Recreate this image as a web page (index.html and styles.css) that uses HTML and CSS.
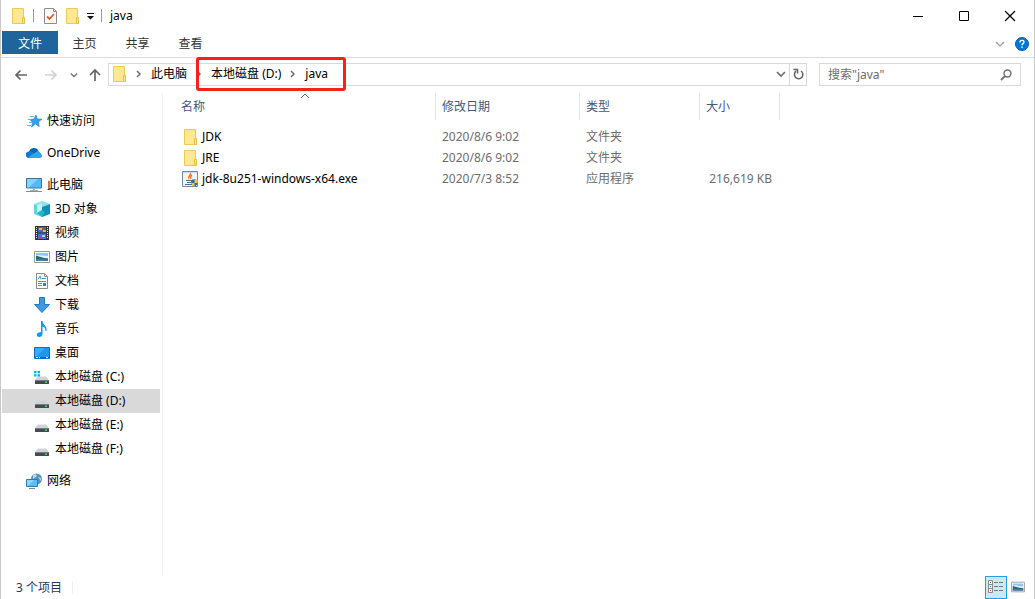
FILE: index.html
```html
<!DOCTYPE html>
<html lang="zh-CN">
<head>
    <meta charset="UTF-8">
    <meta name="viewport" content="width=device-width, initial-scale=1.0">
    <title>java</title>
    <link rel="stylesheet" href="styles.css">
</head>
<body>
    <!-- Shared icons -->
    <svg class="icon-defs" aria-hidden="true">
        <symbol id="folder" viewBox="0 0 16 16">
            <path d="M2.500 .5h11v10h1v5h-12z" fill="#ffe794" stroke="#edc957"/>
            <path d="M12.500 15v-5.500h2v6h-2z" fill="#ffe794" stroke="#e6bf45"/>
        </symbol>
        <symbol id="chevron" viewBox="0 0 8 8">
            <path d="M2 1l3 3-3 3" fill="none" stroke="#707070" stroke-width="1.500"/>
        </symbol>
        <symbol id="down" viewBox="0 0 10 10">
            <path d="M1 3l4 4 4-4" fill="none" stroke="currentColor" stroke-width="1.700"/>
        </symbol>
        <symbol id="picture" viewBox="0 0 16 16">
            <path d="M.5 2.500h15v11H.5z" fill="#fff" stroke="#999"/>
            <path d="M2 4h12v8H2z" fill="#8fc4ff"/>
            <path d="M2 7c3-2 5 0 12 0v2H2z" fill="#e4f1fa"/>
            <path d="M2 7c3 0 6 2 12 2.500V12H2z" fill="#2f6475"/>
            <path d="M2 10.500c4-1 7 0 12 0V12H2z" fill="#477caa"/>
        </symbol>
        <symbol id="drive" viewBox="0 0 16 16">
            <path d="M4 7.500h8l3 3.500H1z" fill="#d0d2d4"/>
            <path d="M1 11h14v4H1z" fill="#444b50"/>
            <path d="M1 11h14v1H1z" fill="#777e82"/>
            <path d="M11 12.500h2v1.500h-2z" fill="#35e05a"/>
        </symbol>
        <symbol id="monitor" viewBox="0 0 16 16">
            <path d="M.5 1.500h15v9.500H.5z" fill="#54b9f8" stroke="#39759b"/>
            <path d="M1 2h11L3 10.500H1z" fill="#86d2ff"/>
            <path d="M7 11.500h2V13H7zM4 13h8v1H4z" fill="#a8b5bf"/>
            <path d="M0 14.500h16" stroke="#7d90a0"/>
        </symbol>
    </svg>

    <div class="window">
        <header class="title-bar">
            <div class="quick-access">
                <svg class="icon"><use href="#folder"/></svg>
                <span class="separator"></span>
                <button class="quick-button" aria-label="属性">
                    <svg class="icon" viewBox="0 0 16 16">
                        <path d="M2.500 .5h9l3 3v12h-12z" fill="#fafafa" stroke="#8c8c8c"/>
                        <path d="M11.500 .5v3h3" fill="none" stroke="#8c8c8c"/>
                        <path d="M5 8.500l2.500 2.500 4.500-5" fill="none" stroke="#f05a22" stroke-width="1.800"/>
                    </svg>
                </button>
                <button class="quick-button" aria-label="新建文件夹">
                    <svg class="icon"><use href="#folder"/></svg>
                </button>
                <button class="quick-button quick-menu" aria-label="自定义快速访问工具栏">
                    <svg class="icon-small" viewBox="0 0 10 10"><path d="M2 2h7v1H2zM2 5h7L5.500 8.500z" fill="#111"/></svg>
                </button>
                <span class="separator"></span>
                <h1 class="title">java</h1>
            </div>
            <div class="window-buttons">
                <button class="window-button" aria-label="最小化">
                    <svg viewBox="0 0 12 12"><path d="M1 6.500h10" stroke="#000"/></svg>
                </button>
                <button class="window-button" aria-label="最大化">
                    <svg viewBox="0 0 12 12"><path d="M1.500 1.500h9v9h-9z" fill="none" stroke="#000"/></svg>
                </button>
                <button class="window-button" aria-label="关闭">
                    <svg viewBox="0 0 12 12"><path d="M1 1l10 10M11 1L1 11" stroke="#000" stroke-width="1.200"/></svg>
                </button>
            </div>
        </header>

        <nav class="ribbon">
            <button class="tab tab-file">文件</button>
            <button class="tab">主页</button>
            <button class="tab">共享</button>
            <button class="tab">查看</button>
            <div class="ribbon-right">
                <button class="ribbon-toggle" aria-label="展开功能区">
                    <svg class="icon-small" viewBox="0 0 10 10"><path d="M1 3l4 4 4-4" fill="none" stroke="#a0a0a0" stroke-width="1.300"/></svg>
                </button>
                <button class="ribbon-toggle" aria-label="帮助">
                    <svg class="icon-help" viewBox="0 0 14 14">
                        <circle cx="7" cy="7" r="6.500" fill="#0078d7" stroke="#0b5ea8"/>
                        <path d="M5 5.500c0-3 4-2.600 4-.4 0 1.500-2 1.500-2 3.200" fill="none" stroke="#fff" stroke-width="1.400"/>
                        <path d="M6.300 9.500h1.400V11H6.300z" fill="#fff"/>
                    </svg>
                </button>
            </div>
        </nav>

        <div class="address-row">
            <div class="nav-buttons">
                <button class="nav-button" aria-label="后退">
                    <svg class="icon" viewBox="0 0 16 16"><path d="M14 8H3M7.500 3.500L3 8l4.500 4.500" fill="none" stroke="#666" stroke-width="1.700"/></svg>
                </button>
                <button class="nav-button" aria-label="前进">
                    <svg class="icon" viewBox="0 0 16 16"><path d="M2 8h11M8.500 3.500L13 8l-4.500 4.500" fill="none" stroke="#d2d2d2" stroke-width="1.700"/></svg>
                </button>
                <button class="nav-button nav-recent" aria-label="最近浏览的位置">
                    <svg class="icon-tiny"><use href="#down"/></svg>
                </button>
                <button class="nav-button nav-up" aria-label="上移">
                    <svg class="icon" viewBox="0 0 16 16"><path d="M8 14V3M3 8l5-5 5 5" fill="none" stroke="#666" stroke-width="1.700"/></svg>
                </button>
            </div>
            <div class="address">
                <svg class="icon"><use href="#folder"/></svg>
                <svg class="crumb-arrow"><use href="#chevron"/></svg>
                <a class="crumb" href="#">此电脑</a>
                <span class="highlight">
                    <svg class="crumb-arrow"><use href="#chevron"/></svg>
                    <a class="crumb" href="#">本地磁盘 (D:)</a>
                    <svg class="crumb-arrow"><use href="#chevron"/></svg>
                    <a class="crumb" href="#">java</a>
                </span>
                <button class="address-button address-history" aria-label="上一个位置">
                    <svg class="icon-small"><use href="#down"/></svg>
                </button>
                <button class="address-button refresh" aria-label="刷新">
                    <svg class="icon-refresh" viewBox="0 0 12 12">
                        <path d="M9 3a4.200 4.200 0 1 1-5 .2" fill="none" stroke="#606060" stroke-width="1.500"/>
                        <path d="M1.500 1.500h4v4" fill="none" stroke="#606060" stroke-width="1.500"/>
                    </svg>
                </button>
            </div>
            <form class="search">
                <input class="search-input" type="text" placeholder='搜索"java"' aria-label="搜索">
                <button class="search-button" type="button" aria-label="搜索">
                    <svg class="icon-search" viewBox="0 0 12 12"><circle cx="7.500" cy="4.500" r="3.500" fill="none" stroke="#707070" stroke-width="1.400"/><path d="M5 7L1 11" stroke="#707070" stroke-width="1.800"/></svg>
                </button>
            </form>
        </div>

        <div class="content">
            <aside class="sidebar">
                <ul class="tree">
                    <li><a class="tree-item" href="#">
                        <svg class="icon" viewBox="0 0 16 16">
                            <path d="M10 2l1.200 4 4.800.2-3.700 2.600 1 4.700-4-2.500L5.500 14l1.200-4.500L4 6.500l4-.5z" fill="#2ea3ee" stroke="#1479bd" stroke-width=".6"/>
                            <path d="M4 3.500h4M2 6.500h3M3 9.500h3M1 12.500h4" stroke="#55baf5"/>
                        </svg>快速访问</a></li>
                </ul>
                <ul class="tree">
                    <li><a class="tree-item" href="#">
                        <svg class="icon" viewBox="0 0 16 16">
                            <path d="M3 7a5 5 0 0 1 9.500-1L9 11H2z" fill="#0b63b8"/>
                            <path d="M3 13a3.200 3.200 0 0 1 0-6.500c2.500-.4 4.500.8 7 3L7 13z" fill="#0f78d4"/>
                            <path d="M9 8c1.500-2.500 4.500-2.500 5.300 0 2.600 1.500 2.100 5-.8 5H3.500C1.500 13 5 9.500 9 8z" fill="#28a8ea"/>
                        </svg>OneDrive</a></li>
                </ul>
                <ul class="tree">
                    <li><a class="tree-item" href="#"><svg class="icon"><use href="#monitor"/></svg>此电脑</a></li>
                    <li><a class="tree-item child" href="#">
                        <svg class="icon" viewBox="0 0 16 16">
                            <path d="M0 3l8-3 8 3-8 3z" fill="#8be3ea"/>
                            <path d="M0 3l8 3v10l-8-3z" fill="#62d3dc"/>
                            <path d="M8 6l8-3v10l-8 3z" fill="#0c94b8"/>
                            <path d="M3 4l5-2v7l-5 3z" fill="#c5f3f6"/>
                            <path d="M3 12l5-3 3 2-3 5z" fill="#24b4ca"/>
                        </svg>3D 对象</a></li>
                    <li><a class="tree-item child" href="#">
                        <svg class="icon" viewBox="0 0 16 16">
                            <path d="M1 1h14v14H1z" fill="#333"/>
                            <path d="M4 2h8v5.500H4z" fill="#4268bb"/>
                            <path d="M4 8.500h8V14H4z" fill="#4275c9"/>
                            <path d="M5 3h3v2H5zM9 5h3v2H9z" fill="#e5b94a"/>
                            <path d="M8 2h2v3H8zM5 12h3v2H5z" fill="#b84a48"/>
                            <path d="M8 10h3v2H8z" fill="#a9cdef"/>
                            <path d="M2.500 2v12M13.500 2v12" stroke="#eee" stroke-dasharray="1 1"/>
                        </svg>视频</a></li>
                    <li><a class="tree-item child" href="#"><svg class="icon"><use href="#picture"/></svg>图片</a></li>
                    <li><a class="tree-item child" href="#">
                        <svg class="icon" viewBox="0 0 16 16">
                            <path d="M2.500 .5h8l3 3v12h-11z" fill="#fff" stroke="#8b8b8b"/>
                            <path d="M10.500 .5v3h3" fill="none" stroke="#8b8b8b"/>
                            <path d="M4 6.500L6 3l1 3.500M8 5.500h4M4 8.500h8M4 10.500h4M4 12.500h4" fill="none" stroke="#3898d8"/>
                            <path d="M9 10h3v3H9z" fill="#4c7c9b"/>
                        </svg>文档</a></li>
                    <li><a class="tree-item child" href="#">
                        <svg class="icon" viewBox="0 0 16 16"><path d="M5.500 .5h5v7h5L8 15.500 .5 7.500h5z" fill="#3e98e5" stroke="#2477bb"/></svg>下载</a></li>
                    <li><a class="tree-item child" href="#">
                        <svg class="icon" viewBox="0 0 16 16"><path d="M7 0h1.500c0 4 5 4.500 4 10h-1c0-3-1.300-4-3-4.200V13c0 2-1.500 3-3.500 3-3 0-3-4 0-4.500L7 11z" fill="#0b9af2"/></svg>音乐</a></li>
                    <li><a class="tree-item child" href="#">
                        <svg class="icon" viewBox="0 0 16 16">
                            <path d="M.5 2.500h15v11H.5z" fill="#1998f4" stroke="#0870c6"/>
                            <path d="M1 3h10L3 11H1z" fill="#35aefb"/>
                            <path d="M1 12h14v1H1z" fill="#0865af"/>
                            <path d="M2 12.500h2m1 0h1m6 0h2" stroke="#d5efff"/>
                        </svg>桌面</a></li>
                    <li><a class="tree-item child" href="#">
                        <svg class="icon" viewBox="0 0 16 16">
                            <use href="#drive" width="16" height="16"/>
                            <path d="M0 2h2.500v2.300H0zM3.500 2H6v2.300H3.500zM0 5.200h2.500v2.300H0zM3.500 5.200H6v2.300H3.500z" fill="#00b7f1"/>
                        </svg>本地磁盘 (C:)</a></li>
                    <li><a class="tree-item child selected" href="#"><svg class="icon"><use href="#drive"/></svg>本地磁盘 (D:)</a></li>
                    <li><a class="tree-item child" href="#"><svg class="icon"><use href="#drive"/></svg>本地磁盘 (E:)</a></li>
                    <li><a class="tree-item child" href="#"><svg class="icon"><use href="#drive"/></svg>本地磁盘 (F:)</a></li>
                </ul>
                <ul class="tree">
                    <li><a class="tree-item" href="#">
                        <svg class="icon" viewBox="0 0 16 16">
                            <circle cx="10.500" cy="6" r="5.500" fill="#5592bd"/>
                            <path d="M7 2c3-2 5 0 3 2L7 6zM12 4l3 1v3z" fill="#b7d9ea"/>
                            <path d="M.5 6.500h11v7H.5z" fill="#59bdf8" stroke="#327ba7"/>
                            <path d="M1 7h7l-6 6H1z" fill="#8bd5ff"/>
                            <path d="M3 15.500h6" stroke="#718d9e"/>
                        </svg>网络</a></li>
                </ul>
            </aside>

            <main class="files">
                <table class="file-table">
                    <colgroup>
                        <col class="col-name">
                        <col class="col-date">
                        <col class="col-type">
                        <col class="col-size">
                    </colgroup>
                    <thead>
                        <tr>
                            <th>名称
                                <svg class="sort-arrow" viewBox="0 0 10 6"><path d="M1 5l4-4 4 4" fill="none" stroke="#666"/></svg>
                            </th>
                            <th>修改日期</th>
                            <th>类型</th>
                            <th>大小</th>
                        </tr>
                    </thead>
                    <tbody>
                        <tr>
                            <td><span class="file-name"><svg class="icon"><use href="#folder"/></svg>JDK</span></td>
                            <td>2020/8/6 9:02</td>
                            <td>文件夹</td>
                            <td></td>
                        </tr>
                        <tr>
                            <td><span class="file-name"><svg class="icon"><use href="#folder"/></svg>JRE</span></td>
                            <td>2020/8/6 9:02</td>
                            <td>文件夹</td>
                            <td></td>
                        </tr>
                        <tr>
                            <td><span class="file-name">
                                <svg class="icon" viewBox="0 0 16 16">
                                    <path d="M.5 .5h15v15H.5z" fill="#f2f5f7" stroke="#6f8ba3"/>
                                    <path d="M1 1h14v1H1z" fill="#cbdbe6"/>
                                    <path d="M8 2c2 2-3 3-1 6M10 4c-2 1-2 2-1 4" fill="none" stroke="#ee7a24" stroke-width="1.400"/>
                                    <path d="M4 9.500h6M5 11.500h4M3 13.500h7M10 9c2 0 2 2 0 2" fill="none" stroke="#456f98"/>
                                    <path d="M9 9.500l3.500-1.500L16 9.500c0 3-1 5-3.500 6.500C10 14.500 9 12.500 9 9.500z" fill="#276cb5"/>
                                    <path d="M12.500 8v4h3.200c.2-.8.3-1.500.3-2.500zM12.500 12v4c-1.700-1-2.700-2-3.200-4z" fill="#f5c83b"/>
                                </svg>jdk-8u251-windows-x64.exe</span></td>
                            <td>2020/7/3 8:52</td>
                            <td>应用程序</td>
                            <td>216,619 KB</td>
                        </tr>
                    </tbody>
                </table>
            </main>
        </div>

        <footer class="status-bar">
            <span class="item-count">3 个项目</span>
            <div class="view-buttons">
                <button class="view-button active" aria-label="详细信息">
                    <svg class="icon" viewBox="0 0 16 16">
                        <path d="M.5 1.500h4v4h-4zM.5 5.500h4v4h-4zM.5 9.500h4v4h-4z" fill="#fff" stroke="#8b8b8b"/>
                        <path d="M2 3h1v1H2z" fill="#3b8b50"/>
                        <path d="M2 7h1v1H2z" fill="#2784c7"/>
                        <path d="M2 11h1v1H2z" fill="#c33"/>
                        <path d="M6 3.500h4m1 0h4M6 7.500h4m1 0h4M6 11.500h4m1 0h4" stroke="#777"/>
                    </svg>
                </button>
                <button class="view-button" aria-label="大缩略图">
                    <svg class="icon-view"><use href="#picture"/></svg>
                </button>
            </div>
        </footer>
    </div>
</body>
</html>
```
FILE: styles.css
```css
* {
    box-sizing: border-box;
}

body {
    margin: 0;
    font-family: "Noto Sans", "Noto Sans CJK SC", sans-serif;
    font-size: 12px;
    line-height: 20px;
    color: #000;
    background-color: #fff;
}

button {
    display: flex;
    align-items: center;
    justify-content: center;
    padding: 0;
    border: none;
    background: none;
    font: inherit;
    color: inherit;
}

a {
    color: inherit;
    text-decoration: none;
}

svg {
    flex-shrink: 0;
}

.icon-defs {
    position: absolute;
    width: 0;
    height: 0;
}

.icon {
    width: 16px;
    height: 16px;
}

.icon-small {
    width: 10px;
    height: 10px;
}

.icon-tiny {
    width: 8px;
    height: 8px;
}

.window {
    display: flex;
    flex-direction: column;
    min-height: 100vh;
    border-left: 1px solid #c8c8c8;
    border-right: 1px solid #c8c8c8;
}

/* Title bar */
.title-bar {
    display: flex;
    justify-content: space-between;
    height: 31px;
}

.quick-access {
    display: flex;
    align-items: center;
    gap: 6px;
    padding-left: 9px;
}

.separator {
    width: 1px;
    height: 13px;
    margin: 0 2px 0 1px;
    background-color: #999;
}

.quick-menu {
    width: 8px;
}

.title {
    margin: 0;
    font-size: 12px;
    font-weight: normal;
}

.window-buttons {
    display: flex;
    padding-right: 1px;
}

.window-button {
    width: 46px;
}

.window-button svg {
    width: 12px;
    height: 12px;
}

/* Ribbon */
.ribbon {
    display: flex;
    height: 27px;
    padding: 0 5px 3px 1px;
    border-bottom: 1px solid #dadbdc;
    color: #333;
}

.tab {
    width: 53px;
    padding-top: 2px;
}

.tab-file {
    width: 56px;
    background-color: #1f659b;
    color: #fff;
}

.ribbon-right {
    display: flex;
    gap: 10px;
    margin-left: auto;
    padding-top: 3px;
}

.icon-help {
    width: 14px;
    height: 14px;
}

/* Address row */
.address-row {
    display: flex;
    align-items: center;
    height: 35px;
    padding: 0 13px 2px 12px;
}

.nav-buttons {
    display: flex;
    gap: 14px;
    width: 95px;
}

.nav-recent {
    width: 8px;
    margin-left: -3px;
    color: #777;
}

.nav-up {
    margin-left: -5px;
}

.address {
    display: flex;
    flex: 1;
    align-items: center;
    height: 23px;
    padding: 0 0 1px 2px;
    border: 1px solid #d9d9d9;
}

.crumb {
    white-space: nowrap;
}

.crumb-arrow {
    width: 8px;
    height: 8px;
    margin: 0 8px;
}

.highlight {
    position: relative;
    display: flex;
    align-items: center;
}

.highlight::after {
    content: "";
    position: absolute;
    inset: -7px -18px -7px 9px;
    border: 3px solid #f9201a;
    border-radius: 3px;
    pointer-events: none;
}

.address-button {
    width: 17px;
    height: 21px;
    color: #707070;
}

.address-history {
    margin-left: auto;
}

.refresh {
    border-left: 1px solid #d9d9d9;
}

.icon-refresh,
.icon-search {
    width: 12px;
    height: 12px;
}

.search {
    display: flex;
    width: 202px;
    height: 23px;
    margin-left: 12px;
    border: 1px solid #d9d9d9;
}

.search-input {
    flex: 1;
    min-width: 0;
    padding: 0 8px;
    border: none;
    outline: none;
    background: none;
    font: inherit;
}

.search-input::placeholder {
    color: #6d6d6d;
}

.search-button {
    width: 28px;
}

/* Content */
.content {
    display: flex;
    flex: 1;
}

.sidebar {
    width: 162px;
    padding: 16px 2px 0 1px;
    border-right: 1px solid #f0f0f0;
}

.tree {
    margin: 0 0 8px;
    padding: 0;
    list-style: none;
}

.tree-item {
    display: flex;
    align-items: center;
    gap: 5px;
    height: 24px;
    padding-left: 24px;
    white-space: nowrap;
}

.child {
    padding-left: 32px;
}

.selected {
    background-color: #d9d9d9;
}

.files {
    flex: 1;
    padding-left: 9px;
}

.file-table {
    width: 608px;
    border-collapse: separate;
    border-spacing: 0;
    table-layout: fixed;
}

.col-name {
    width: 264px;
}

.col-date {
    width: 144px;
}

.col-type {
    width: 120px;
}

.col-size {
    width: 80px;
}

.file-table th {
    position: relative;
    height: 27px;
    padding: 0 6px;
    border-right: 1px solid #e5e5e5;
    color: #44597a;
    font-weight: normal;
    text-align: left;
}

.file-table th:first-child {
    padding-left: 9px;
}

.sort-arrow {
    position: absolute;
    top: 0;
    left: 128px;
    width: 10px;
    height: 6px;
}

.file-table tbody::before {
    content: "";
    display: block;
    height: 6px;
}

.file-table td {
    height: 21px;
    padding: 0 6px;
    color: #6d6d6d;
    white-space: nowrap;
}

.file-table td:first-child {
    padding-left: 10px;
    color: #000;
}

.file-table td:last-child {
    padding-right: 8px;
    text-align: right;
}

.file-name {
    display: flex;
    align-items: center;
    gap: 4px;
}

/* Status bar */
.status-bar {
    display: flex;
    align-items: center;
    justify-content: space-between;
    height: 24px;
    padding: 0 5px 0 15px;
    color: #1e395b;
}

.item-count {
    padding: 1px 10px 0 0;
    border-right: 1px solid #f0f0f0;
    line-height: 12px;
}

.view-buttons {
    display: flex;
}

.view-button {
    width: 22px;
    height: 23px;
}

.active {
    border: 1px solid #26a0da;
    background-color: #cbe8f6;
}

.icon-view {
    width: 14px;
    height: 14px;
}
```
